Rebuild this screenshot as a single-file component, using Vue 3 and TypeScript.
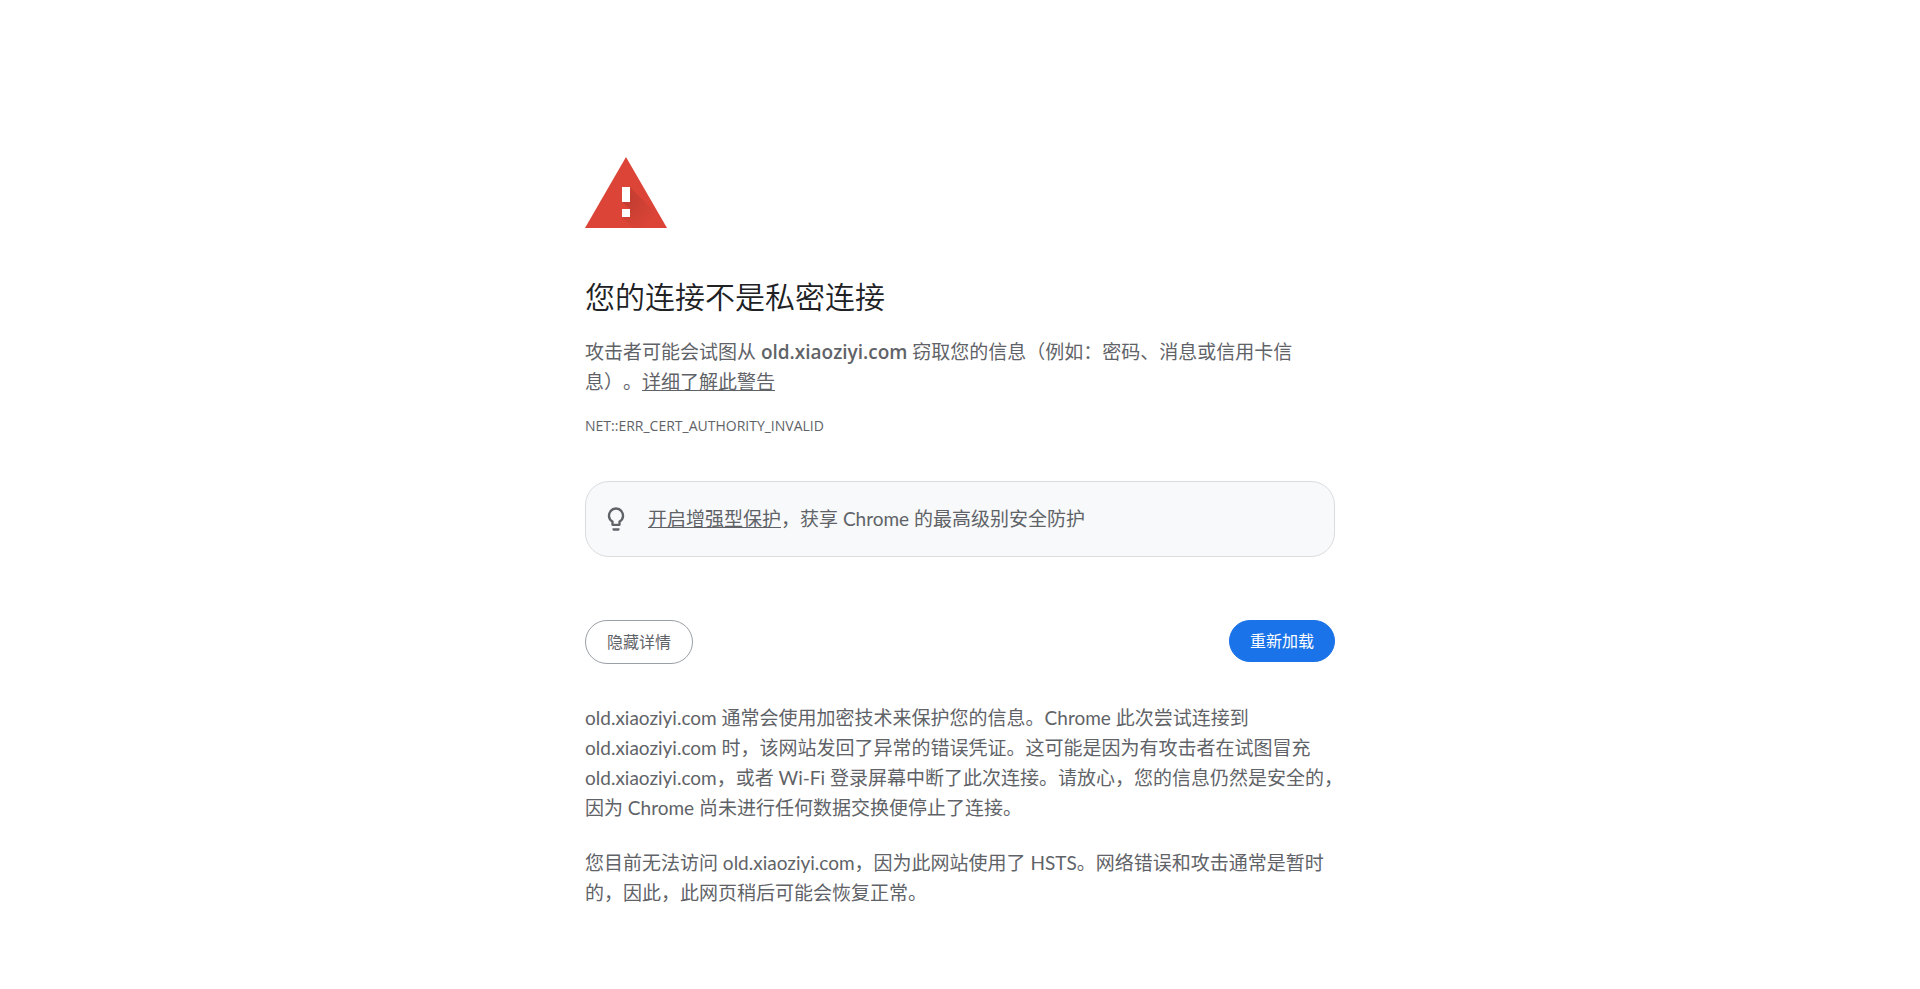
<script setup lang="ts">
import { ref } from 'vue'

const host = 'old.xiaoziyi.com'
const detailsOpen = ref<boolean>(true)
const reload = (): void => window.location.reload()
</script>

<template>
  <main class="interstitial">
    <svg class="warning" viewBox="0 0 82 72" role="img" aria-label="警告">
      <defs>
        <radialGradient id="shade" gradientUnits="userSpaceOnUse" cx="41" cy="42" r="34">
          <stop offset="0" stop-color="#020202" stop-opacity=".12" />
          <stop offset="1" stop-color="#020202" stop-opacity="0" />
        </radialGradient>
        <clipPath id="triangle"><path d="M41 0 82 71H0Z" /></clipPath>
      </defs>
      <path d="M41 0 82 71H0Z" fill="#db4437" />
      <path d="M45 30 86 71H48L37 60 45 52 37 45Z" fill="url(#shade)" clip-path="url(#triangle)" />
      <path d="M37 30h8v15h-8zM37 52h8v8h-8z" fill="#fff" />
    </svg>
    <h1>您的连接不是私密连接</h1>
    <p class="lead">攻击者可能会试图从 <strong>{{ host }}</strong> 窃取您的信息（例如：密码、消息或信用卡信息）。<a href="#">详细了解此警告</a></p>
    <div class="code">NET::ERR_CERT_AUTHORITY_INVALID</div>
    <div class="promo">
      <svg class="bulb" viewBox="0 0 24 24" aria-hidden="true">
        <path d="M9 21c0 .5.4 1 1 1h4c.6 0 1-.5 1-1v-1H9v1zm3-19a7 7 0 0 0-4 12.7V17c0 .5.4 1 1 1h6c.6 0 1-.5 1-1v-2.3A7 7 0 0 0 12 2zm2.9 11.1-.9.6V16h-4v-2.3l-.9-.6a5 5 0 1 1 5.8 0z" fill="#5f6368" />
      </svg>
      <p><a href="#">开启增强型保护</a>，获享 Chrome 的最高级别安全防护</p>
    </div>
    <div class="actions">
      <button type="button" class="secondary" @click="detailsOpen = !detailsOpen">{{ detailsOpen ? '隐藏详情' : '高级' }}</button>
      <button type="button" class="primary" @click="reload">重新加载</button>
    </div>
    <section v-if="detailsOpen" class="details">
      <p>{{ host }} 通常会使用加密技术来保护您的信息。Chrome 此次尝试连接到 {{ host }} 时，该网站发回了异常的错误凭证。这可能是因为有攻击者在试图冒充 {{ host }}，或者 Wi-Fi 登录屏幕中断了此次连接。请放心，您的信息仍然是安全的，因为 Chrome 尚未进行任何数据交换便停止了连接。</p>
      <p>您目前无法访问 {{ host }}，因为此网站使用了 HSTS。网络错误和攻击通常是暂时的，因此，此网页稍后可能会恢复正常。</p>
    </section>
  </main>
</template>

<style>
body { background: #fff; }
</style>

<style scoped>
.interstitial {
  box-sizing: border-box;
  max-width: 750px;
  margin: 0 auto;
  padding-top: 157px;
  color: #5f6368;
  font: 400 19px/30px Lato, "Noto Sans CJK SC", sans-serif;
}
.warning { display: block; width: 82px; height: 72px; }
h1 { margin: 48px 0 20px; color: #202124; font-family: "Open Sans", "Noto Sans CJK SC", sans-serif; font-size: 30px; font-weight: 350; line-height: 40px; }
p { margin: 0; }
strong { font-family: "Open Sans", sans-serif; font-weight: 600; }
a { color: inherit; text-decoration: underline; }
.lead { text-spacing-trim: space-all; }
.code { margin-top: 17px; font-family: "Open Sans", sans-serif; font-size: 14px; line-height: 24px; }
.promo { display: flex; align-items: center; gap: 18px; margin-top: 43px; padding: 22px 16px; border: 1px solid #dadce0; border-radius: 24px; background: #f8f9fa; }
.bulb { width: 28px; height: 28px; }
.actions { display: flex; justify-content: space-between; align-items: flex-start; margin-top: 63px; }
button { box-sizing: border-box; height: 44px; padding: 0 21px; border: 1px solid #9aa0a6; border-radius: 22px; background: #fff; color: #5f6368; font: 400 16px/24px "Open Sans", "Noto Sans CJK SC", sans-serif; }
.primary { height: 42px; padding: 0 20px; border-color: #1a73e8; background: #1a73e8; color: #fff; }
.details { margin: 39px -12px 0 0; }
.details p + p { margin-top: 25px; }
</style>
